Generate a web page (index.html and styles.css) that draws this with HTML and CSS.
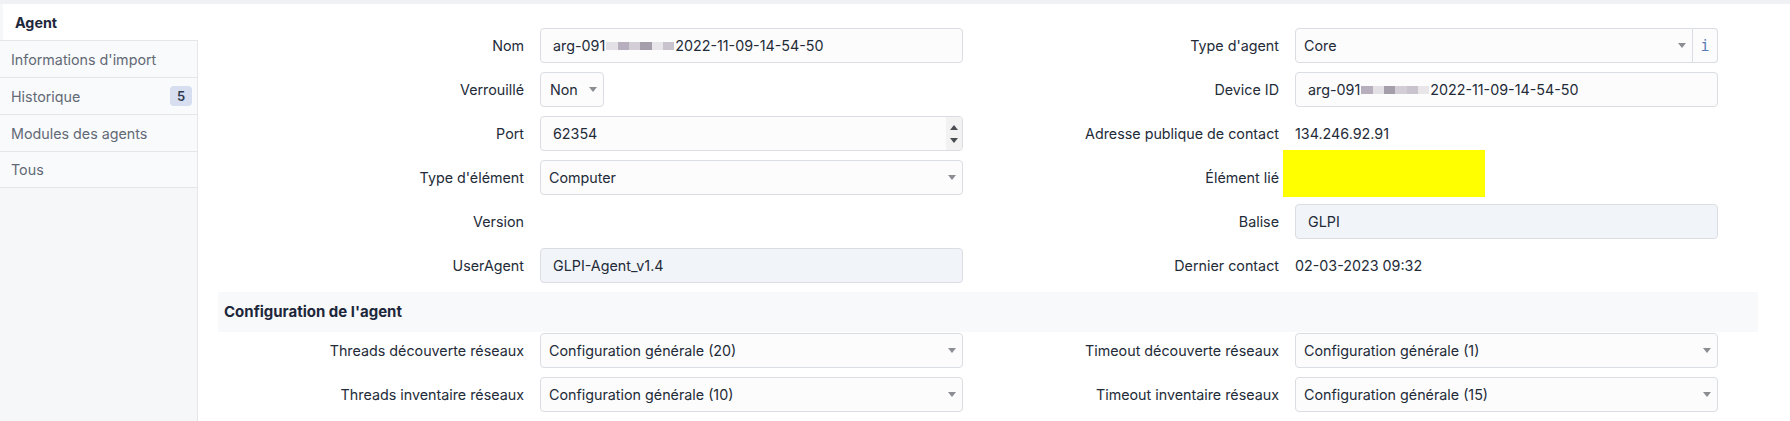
FILE: index.html
```html
<!DOCTYPE html>
<html lang="fr">
<head>
<meta charset="utf-8">
<title>Agent</title>
<link rel="stylesheet" href="styles.css">
</head>
<body>
<div class="page">
  <nav class="tabs">
    <div class="tab active">Agent</div>
    <div class="tab">Informations d'import</div>
    <div class="tab">Historique <span class="badge">5</span></div>
    <div class="tab">Modules des agents</div>
    <div class="tab last">Tous</div>
  </nav>
  <main class="content">
    <div class="grid">
      <div class="label">Nom</div>
      <div class="input"><span>arg-091</span><span class="blur"><i class="b1"></i><i class="b2"></i><i class="b3"></i><i class="b4"></i><i class="b5"></i><i class="b6"></i></span><span>2022-11-09-14-54-50</span></div>
      <div class="label">Type d'agent</div>
      <div class="group">
        <div class="input select"><span>Core</span><b class="arrow"></b></div>
        <div class="info">i</div>
      </div>
      <div></div>

      <div class="label">Verrouillé</div>
      <div><div class="input select small"><span>Non</span><b class="arrow"></b></div></div>
      <div class="label">Device ID</div>
      <div class="input"><span>arg-091</span><span class="blur"><i class="b2"></i><i class="b1"></i><i class="b4"></i><i class="b3"></i><i class="b6"></i><i class="b5"></i></span><span>2022-11-09-14-54-50</span></div>
      <div></div>

      <div class="label">Port</div>
      <div class="input number"><span>62354</span><div class="spin"><b class="up"></b><b class="down"></b></div></div>
      <div class="label">Adresse publique de contact</div>
      <div class="value">134.246.92.91</div>
      <div></div>

      <div class="label">Type d'élément</div>
      <div class="input select"><span>Computer</span><b class="arrow"></b></div>
      <div class="label">Élément lié</div>
      <div class="value linked"><div class="redact"></div></div>
      <div></div>

      <div class="label">Version</div>
      <div></div>
      <div class="label">Balise</div>
      <div class="input readonly"><span>GLPI</span></div>
      <div></div>

      <div class="label">UserAgent</div>
      <div class="input readonly"><span>GLPI-Agent_v1.4</span></div>
      <div class="label">Dernier contact</div>
      <div class="value">02-03-2023 09:32</div>
      <div></div>
    </div>

    <div class="section-header">Configuration de l'agent</div>

    <div class="grid config">
      <div class="label">Threads découverte réseaux</div>
      <div class="input select"><span>Configuration générale (20)</span><b class="arrow"></b></div>
      <div class="label">Timeout découverte réseaux</div>
      <div class="input select"><span>Configuration générale (1)</span><b class="arrow"></b></div>
      <div></div>

      <div class="label">Threads inventaire réseaux</div>
      <div class="input select"><span>Configuration générale (10)</span><b class="arrow"></b></div>
      <div class="label">Timeout inventaire réseaux</div>
      <div class="input select"><span>Configuration générale (15)</span><b class="arrow"></b></div>
      <div></div>
    </div>
  </main>
</div>
</body>
</html>
```

FILE: styles.css
```css
* { box-sizing: border-box; }

html, body {
  margin: 0;
  padding: 0;
  background: #ffffff;
}

body {
  font-family: Inter, "Noto Sans", "Liberation Sans", sans-serif;
  font-size: 14.3px;
  color: #232b38;
}

.page {
  display: flex;
  min-height: 421px;
  border-top: 4px solid #eff1f4;
}

/* Sidebar tabs */
.tabs {
  width: 198px;
  flex: 0 0 198px;
  background: #f6f7f9;
  border-right: 1px solid #e4e6e9;
  min-height: 417px;
}

.tab {
  height: 37px;
  display: flex;
  align-items: center;
  padding-left: 11px;
  padding-right: 5px;
  color: #626976;
  background: #f9fafb;
  border-top: 1px solid #e4e6e9;
}

.tab.last {
  border-bottom: 1px solid #e4e6e9;
}

.tab.active {
  height: 36px;
  margin-left: 3px;
  margin-right: -1px;
  padding-left: 12px;
  background: #ffffff;
  border-top: none;
  color: #1d273b;
  font-weight: 700;
}

.badge {
  margin-left: auto;
  width: 22px;
  height: 20px;
  border-radius: 4px;
  background: #d6def0;
  color: #2e3a4d;
  font-size: 13px;
  font-weight: 600;
  display: flex;
  align-items: center;
  justify-content: center;
}

/* Content */
.content {
  flex: 1;
  padding: 24px 32px 0 20px;
}

.grid {
  display: grid;
  grid-template-columns: 322px 423px 332px 423px 1fr;
  grid-auto-rows: 35px;
  row-gap: 9px;
}

.grid.config {
  margin-top: 1px;
}

.label {
  align-self: center;
  text-align: right;
  padding-right: 16px;
  white-space: nowrap;
  color: #232b38;
}

.value {
  align-self: center;
  white-space: nowrap;
}

.value.linked {
  position: relative;
  height: 35px;
}

.redact {
  position: absolute;
  left: -12px;
  top: -10px;
  width: 202px;
  height: 47px;
  background: #ffff00;
}

.input {
  height: 35px;
  border: 1px solid #dadde1;
  border-radius: 4px;
  background: #fcfcfd;
  display: flex;
  align-items: center;
  padding: 0 12px;
  white-space: nowrap;
  color: #232b38;
}

.input.readonly {
  background: #f1f4f8;
}

.input.select {
  padding-left: 8px;
  padding-right: 6px;
}

.input.select.small {
  width: 64px;
  padding-left: 9px;
}

.arrow {
  margin-left: auto;
  width: 0;
  height: 0;
  border-left: 4px solid transparent;
  border-right: 4px solid transparent;
  border-top: 5px solid #8a8d91;
}

.group {
  display: flex;
}

.group .input {
  flex: 1;
  border-radius: 4px 0 0 4px;
}

.info {
  width: 25px;
  height: 35px;
  border: 1px solid #dadde1;
  border-left: none;
  border-radius: 0 4px 4px 0;
  background: #fcfcfd;
  display: flex;
  align-items: center;
  justify-content: center;
  font-family: "DejaVu Sans Mono", monospace;
  font-size: 15px;
  color: #5a7fb8;
}

.input.number {
  padding-right: 0;
}

.spin {
  margin-left: auto;
  width: 16px;
  height: 33px;
  background: #f2f2f3;
  display: flex;
  flex-direction: column;
  align-items: center;
  justify-content: center;
  gap: 8px;
  border-radius: 0 3px 3px 0;
}

.spin .up {
  width: 0;
  height: 0;
  border-left: 4px solid transparent;
  border-right: 4px solid transparent;
  border-bottom: 5px solid #4a4d52;
}

.spin .down {
  width: 0;
  height: 0;
  border-left: 4px solid transparent;
  border-right: 4px solid transparent;
  border-top: 5px solid #4a4d52;
}

/* pixelated redaction */
.blur {
  display: inline-flex;
  align-items: center;
  height: 10px;
  width: 68px;
  margin: 0 1px;
}

.blur i {
  display: block;
  height: 8px;
  flex: 1;
}

.blur .b1 { background: #e4e1e6; }
.blur .b2 { background: #b7afbd; }
.blur .b3 { background: #d3ced6; }
.blur .b4 { background: #a59fac; }
.blur .b5 { background: #e9e6ea; }
.blur .b6 { background: #c9c3cd; }

/* Section header */
.section-header {
  margin-top: 9px;
  height: 40px;
  line-height: 40px;
  background: #f8f9fa;
  padding-left: 6px;
  font-size: 15px;
  font-weight: 700;
  color: #1d273b;
}
```
